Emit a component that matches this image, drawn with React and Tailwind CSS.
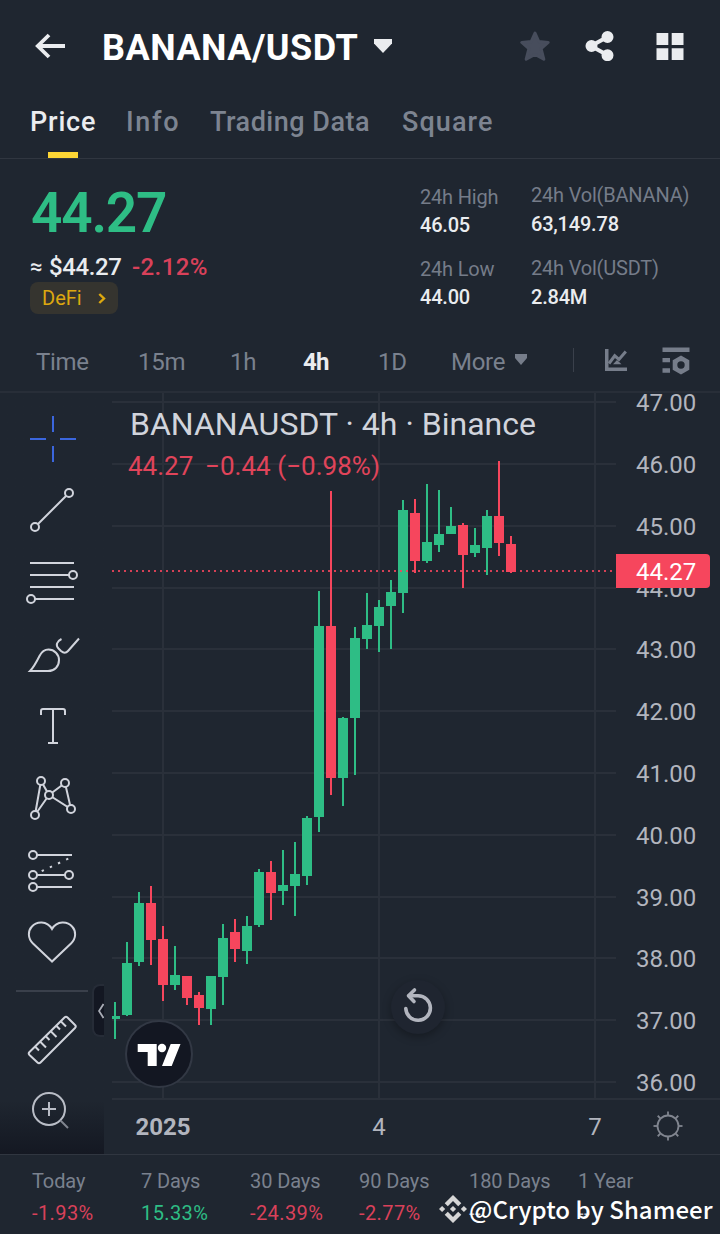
const GREEN = '#2ebd85'
const RED = '#f6465d'
const LINE = '#d1d4dc'

const TABS = [
  { label: 'Price', cls: 'w-[96px] text-[#eaecef] tracking-[0.8px]' },
  { label: 'Info', cls: 'w-[84px] text-[#7d8491] tracking-[1.7px]' },
  { label: 'Trading Data', cls: 'w-[192px] text-[#7d8491] tracking-[0.5px]' },
  { label: 'Square', cls: 'w-[120px] text-[#7d8491] tracking-[1.1px]' },
]

const INTERVALS = ['Time', '15m', '1h', '4h', '1D']

const PERIODS = [
  { label: 'Today', value: '-1.93%', color: 'text-[#d9415a]' },
  { label: '7 Days', value: '15.33%', color: 'text-[#2ebd85]' },
  { label: '30 Days', value: '-24.39%', color: 'text-[#d9415a]' },
  { label: '90 Days', value: '-2.77%', color: 'text-[#d9415a]' },
  { label: '180 Days', value: '--', color: 'text-[#b7bdc6]' },
  { label: '1 Year', value: '--', color: 'text-[#b7bdc6]' },
]

// high, body top, body bottom, low, up?
const CANDLES = [
  [1002, 1016, 1019, 1039, 1],
  [942, 963, 1015, 1016, 1],
  [892, 903, 962, 966, 1],
  [886, 903, 940, 965, 0],
  [926, 939, 985, 1001, 0],
  [946, 975, 985, 990, 1],
  [976, 976, 998, 1005, 0],
  [992, 995, 1008, 1025, 0],
  [976, 976, 1009, 1025, 1],
  [924, 938, 977, 1005, 1],
  [919, 932, 949, 962, 0],
  [916, 926, 951, 964, 1],
  [869, 872, 925, 927, 1],
  [861, 872, 893, 920, 0],
  [850, 885, 891, 905, 1],
  [842, 874, 886, 916, 1],
  [816, 818, 876, 885, 1],
  [591, 626, 817, 832, 1],
  [491, 626, 778, 795, 0],
  [717, 718, 778, 806, 1],
  [627, 638, 718, 775, 1],
  [593, 625, 639, 649, 1],
  [600, 607, 626, 652, 1],
  [580, 592, 606, 649, 1],
  [500, 510, 593, 613, 1],
  [499, 513, 561, 573, 0],
  [484, 542, 561, 563, 1],
  [490, 534, 545, 552, 1],
  [507, 526, 534, 534, 1],
  [523, 525, 555, 588, 0],
  [528, 545, 553, 557, 1],
  [510, 516, 548, 575, 1],
  [461, 516, 543, 556, 0],
  [536, 544, 572, 573, 0],
]

const PRICES = [
  ['47.00', 402], ['46.00', 464], ['45.00', 526], ['44.00', 588], ['43.00', 649], ['42.00', 711],
  ['41.00', 773], ['40.00', 835], ['39.00', 897], ['38.00', 958], ['37.00', 1020], ['36.00', 1082],
]

function Tool({ children, stroke = LINE }) {
  return (
    <svg className="w-[72px] h-[72px] shrink-0" viewBox="0 0 72 72" fill="none" stroke={stroke} strokeWidth="2">
      {children}
    </svg>
  )
}

function Ring({ x, y }) {
  return <circle cx={x} cy={y} r="4" fill="#1f2630" />
}

function Header() {
  return (
    <div className="flex items-center h-[92px] pl-[35px]">
      <svg className="w-[31px] h-[26px]" viewBox="0 0 31 26" fill="none" stroke="#eaecef" strokeWidth="3.8">
        <path d="M30 13H3M14 2L2.8 13L14 24" />
      </svg>
      <h1 className="ml-[36px] w-[272px] pt-[3px] text-[36px] leading-[46px] font-bold tracking-[0.5px] text-white whitespace-nowrap">
        BANANA/USDT
      </h1>
      <svg className="w-[18px] h-[14px]" viewBox="0 0 18 14" fill="#eaecef">
        <path d="M0 0H18V4.5L9 14L0 4.5Z" />
      </svg>
      <svg className="ml-[128px] w-[30px] h-[30px]" viewBox="0 0 30 30" fill="#474d5c" stroke="#474d5c" strokeWidth="3" strokeLinejoin="round">
        <path d="M15 2L18.8 10.5L28.2 11.4L21.1 17.7L23.8 28.2L15 23.4L6.2 28.2L8.9 17.7L1.8 11.4L11.2 10.5Z" />
      </svg>
      <svg className="ml-[35px] w-[30px] h-[30px]" viewBox="0 0 30 30" fill="#eaecef" stroke="#eaecef" strokeWidth="4">
        <path d="M22.3 6L6 15L22.3 24" fill="none" />
        <circle cx="6.5" cy="15" r="4" />
        <circle cx="22.5" cy="6" r="4" />
        <circle cx="22.5" cy="24.2" r="4" />
      </svg>
      <svg className="ml-[41px] w-[28px] h-[27px]" viewBox="0 0 28 27" fill="#eaecef">
        <path d="M0.5 0H12.3V12H0.5ZM15.7 0H27.5V12H15.7ZM0.5 15.2H12.3V27H0.5ZM15.7 15.2H27.5V27H15.7Z" />
      </svg>
    </div>
  )
}

function Stat({ label, value }) {
  return (
    <div>
      <p className="text-[#757c89] tracking-[-0.2px]">{label}</p>
      <p className="text-[#eaecef] font-medium tracking-[-0.2px]">{value}</p>
    </div>
  )
}

function Summary() {
  return (
    <div className="flex h-[173px]">
      <div className="w-[420px] pl-[30px] pt-[27px]">
        <p className="ml-px text-[55px] leading-[54px] font-semibold tracking-[-1.2px] text-[#2ebd85]">44.27</p>
        <p className="mt-3 text-[24px] leading-[30px] font-medium text-[#eaecef] flex">
          <span className="w-[19px] text-[22px]">≈</span>
          <span className="w-[83px] tracking-[-0.4px]">$44.27</span>
          <span className="text-[#d9415a] tracking-[0.4px]">-2.12%</span>
        </p>
        <div className="flex items-center w-[88px] h-8 pl-3 rounded-lg bg-[#35342f] text-[20px] text-[#dda80f]">
          DeFi
          <svg className="ml-[16px] w-2 h-[11px]" viewBox="0 0 8 11" fill="none" stroke="#dda80f" strokeWidth="2.4">
            <path d="M1.3 1L6 5.5L1.3 10" />
          </svg>
        </div>
      </div>
      <div className="w-[111px] pt-[24px] text-[20px] leading-[28px] flex flex-col gap-4">
        <Stat label="24h High" value="46.05" />
        <Stat label="24h Low" value="44.00" />
      </div>
      <div className="pt-[22px] text-[20px] leading-[28.5px] flex flex-col gap-4">
        <Stat label="24h Vol(BANANA)" value="63,149.78" />
        <Stat label="24h Vol(USDT)" value="2.84M" />
      </div>
    </div>
  )
}

function Intervals() {
  return (
    <div className="flex items-center h-[61px] pl-9 border-b-2 border-[#282e38] text-[24px] tracking-[-0.3px] text-[#7a818e]">
      <div className="grid grid-cols-[102px_92px_73px_75px_73px]">
        {INTERVALS.map(t => (
          <span key={t} className={t === '4h' ? 'font-bold tracking-[-0.8px] text-[#eaecef]' : ''}>{t}</span>
        ))}
      </div>
      <span className="w-[64px]">More</span>
      <svg className="w-3 h-[11px] -mt-1" viewBox="0 0 12 11" fill="#767d8a">
        <path d="M0 0H12V4L6 11L0 4Z" />
      </svg>
      <div className="ml-[46px] w-px h-6 -mt-1 bg-[#3a404b]" />
      <svg className="ml-[31px] w-[22px] h-[22px] -mt-[3px]" viewBox="0 0 22 22" fill="none" stroke="#767d8a">
        <path d="M1.7 0V20.2H22" strokeWidth="3.6" />
        <path d="M4 14.5L9.7 6.8L14 10.5L20.8 2.5" strokeWidth="3" />
        <path d="M8 15.3L12 11L16.500 15.3Z" fill="#767d8a" stroke="none" />
      </svg>
      <svg className="ml-[35px] w-[28px] h-[28px] -mt-0.5" viewBox="0 0 28 28" fill="#767d8a">
        <path d="M0.5 0.5H27.5V5H0.5ZM0.5 11H8V15.3H0.5ZM0.5 21.3H8V25.7H0.5Z" />
        <path fillRule="evenodd" d="M19 8.5L27.3 13.2V22.8L19 27.5L10.7 22.8V13.2ZM19 14.3A3.7 3.7 0 1 0 19 21.7A3.7 3.7 0 1 0 19 14.3Z" />
      </svg>
    </div>
  )
}

function Toolbar() {
  return (
    <div className="relative w-[104px] h-[761px] pt-[10px] pl-4 flex flex-col bg-linear-to-b from-[#1f2630] from-93% to-[#141822]">
      <Tool stroke="#3b66dd">
        <path d="M37 13V29M37 43V59M14 36H30M44 36H60" />
      </Tool>
      <Tool>
        <path d="M19 52L53 18" />
        <Ring x={53} y={18} />
        <Ring x={19} y={52} />
      </Tool>
      <Tool>
        <path d="M14 16H58M14 28H53M14 40H58M19 52H58" />
        <Ring x={57} y={28} />
        <Ring x={15} y={52} />
      </Tool>
      <Tool>
        <path d="M14 52C18 48 21 42 23.5 37C26 32 29 30.5 32.5 30.5C38.5 30.5 43 35.5 43 41C43 47.5 38.5 52 32 52Z" />
        <path d="M45.5 20C40.5 22.5 39.5 26.5 42.5 29.5L45 32C47.5 34.2 50 34.2 52 32L63 19.5" />
      </Tool>
      <Tool>
        <path d="M25 24V20Q25 18 27 18H47Q49 18 49 20V24M37 18V52M32 52H42" />
      </Tool>
      <Tool>
        <path d="M25 18L19 52L33 32ZM33 32L49 20L55 46Z" />
        <Ring x={25} y={18} />
        <Ring x={49} y={20} />
        <Ring x={33} y={32} />
        <Ring x={55} y={46} />
        <Ring x={19} y={52} />
      </Tool>
      <Tool>
        <path d="M17 20H56M17 40H53M17 52H56" />
        <path d="M25.7 36.2L53 23.3" strokeDasharray="2.4 6.6" />
        <Ring x={17} y={20} />
        <Ring x={17} y={40} />
        <Ring x={53} y={40} />
        <Ring x={17} y={52} />
      </Tool>
      <Tool>
        <path d="M36 54.5L17 36.5C11.5 31 12 24 15.5 20C20.5 14 31 13.5 36 22C41 13.5 51.5 14 56.5 20C60 24 60.5 31 55 36.5Z" />
      </Tool>
      <div className="mt-[11px] w-[72px] h-0.5 shrink-0 bg-[#3a404b]" />
      <div className="h-3 shrink-0" />
      <Tool>
        <path d="M48.5 13.5Q50 12 51.5 13.5L59 21Q60.5 22.5 59 24L24.5 58.5Q23 60 21.5 58.5L13.5 51Q12 49.5 13.5 48Z" />
        <path d="M19 42.5L23 46.5M24 37.5L30 43.5M29.5 32L33.5 36M34.5 27L40.5 33M40 21.5L44 25.5M44.5 17L50 22.5" />
      </Tool>
      <Tool stroke="#b9bdc6">
        <circle cx="33" cy="33" r="16" />
        <path d="M33 26V40M26 33H40" />
        <path d="M44.5 44.5L52 52" stroke="#80858f" />
      </Tool>
      <div className="absolute right-0 top-[591px] w-[12px] h-[53px] rounded-l-lg border-2 border-r-0 border-[#262c37] bg-[#131722] flex items-center justify-end">
        <svg className="w-[6px] h-4" viewBox="0 0 6 16" fill="none" stroke="#a9adb6" strokeWidth="1.8">
          <path d="M5.5 1L1 8L5.5 15" />
        </svg>
      </div>
    </div>
  )
}

function Chart() {
  return (
    <svg className="w-[616px] h-[761px]" viewBox="104 393 616 761" fontFamily="Roboto, sans-serif">
      <g stroke="#2a303a" strokeWidth="2">
        {PRICES.map(([p, y]) => <path key={p} d={`M112 ${y}H616`} />)}
        <path d="M163 393V1099M379 393V1099M595 393V1099M112 1099H720" />
      </g>
      {CANDLES.map(([high, top, bottom, low, up], i) => {
        const x = 115 + i * 12
        const left = Math.max(x - 5, 112)
        return (
          <g key={x} fill={up ? GREEN : RED}>
            <rect x={x - 1} y={high} width="2" height={low - high} />
            <rect x={left} y={top} width={x + 5 - left} height={bottom - top} />
          </g>
        )
      })}
      <path d="M112 571H614" stroke={RED} strokeWidth="2" strokeDasharray="2 4" opacity="0.85" />

      <text x="130" y="435" fontSize="32" fill="#d1d4dc" textLength="406">BANANAUSDT · 4h · Binance</text>
      <g fontSize="26" fill="#e0445a">
        <text x="128" y="475">44.27</text>
        <text x="205" y="475" textLength="175">−0.44 (−0.98%)</text>
      </g>

      <g fontSize="24" fill="#b2b5be">
        {PRICES.map(([p, y]) => <text key={p} x="636" y={y + 9}>{p}</text>)}
        <g textAnchor="middle">
          <text x="163" y="1135" fontWeight="700">2025</text>
          <text x="379" y="1135">4</text>
          <text x="595" y="1135">7</text>
        </g>
      </g>
      <path d="M616 554H706Q710 554 710 558V584Q710 588 706 588H616Z" fill={RED} />
      <text x="636" y="580" fontSize="24" fill="#fff">44.27</text>

      {/* TradingView badge */}
      <circle cx="159" cy="1054" r="33" fill="#131722" stroke="#323844" strokeWidth="2" />
      <g fill="#fff">
        <path d="M137.7 1044H156.7V1066H147.7V1052H137.7ZM170.7 1044H180.5L171.7 1066H162Z" />
        <circle cx="162" cy="1048" r="4.2" />
      </g>

      {/* reset */}
      <circle cx="418" cy="1007" r="27" fill="#1f2530" style={{ filter: 'drop-shadow(0 3px 4px rgba(0,0,0,0.3))' }} />
      <g fill="none" stroke="#b2b5be" strokeWidth="3.6" strokeLinecap="round" strokeLinejoin="round">
        <path d="M405.8 1008.5A12.3 12.3 0 1 0 418 995.7H409" />
        <path d="M414.5 990L408.5 995.7L414 1001.5" />
      </g>

      {/* axis settings */}
      <g stroke="#80858f" strokeWidth="1.8" fill="none">
        <circle cx="668" cy="1126" r="10.5" />
        {[0, 45, 90, 135, 180, 225, 270, 315].map(a => (
          <path key={a} d="M668 1115.5V1111.5" transform={`rotate(${a} 668 1126)`} />
        ))}
      </g>
    </svg>
  )
}

function Footer() {
  return (
    <div className="relative h-[80px] border-t border-[#303640] pl-8 pt-[11px]">
      <div className="grid grid-cols-[109px_109px_109px_110px_109px_100px] text-[20px] tracking-[-0.1px]">
        {PERIODS.map(p => (
          <div key={p.label} className="whitespace-nowrap">
            <p className="leading-[31px] text-[#7a818e]">{p.label}</p>
            <p className={`leading-[33px] tracking-[0.4px] ${p.color}`}>{p.value}</p>
          </div>
        ))}
      </div>
      <div className="absolute left-[439px] top-[37px] h-[34px] flex items-center">
        <svg className="w-[28px] h-[28px]" viewBox="0 0 28 28" fill="#d6d6d6">
          <path d="M14 0L22.3 8.2L19.2 11.2L14 6.1L8.8 11.2L5.7 8.2Z" />
          <path d="M14 28L22.3 19.8L19.2 16.8L14 21.9L8.8 16.8L5.7 19.8Z" />
          <path d="M14 10.9L17.1 14L14 17.1L10.9 14ZM3.1 10.9L6.2 14L3.1 17.1L0 14ZM24.9 10.9L28 14L24.9 17.1L21.8 14Z" />
        </svg>
        <span className="ml-[2px] text-[24px] leading-[34px] font-medium tracking-[0.07px] text-white whitespace-nowrap font-['Noto_Sans_CJK_SC',sans-serif]">
          @Crypto by Shameer
        </span>
      </div>
    </div>
  )
}

export default function App() {
  return (
    <div className="w-[720px] h-[1234px] overflow-hidden bg-[#1f2630] font-['Roboto',sans-serif]">
      <Header />
      <div className="flex h-[67px] pl-[30px] border-b border-[#303640] text-[27px] font-medium">
        {TABS.map(t => (
          <div key={t.label} className={t.cls}>
            <p className="leading-[60px] whitespace-nowrap">{t.label}</p>
            {t.label === 'Price' && <div className="ml-[18px] w-[30px] h-1.5 bg-[#fcd535]" />}
          </div>
        ))}
      </div>
      <Summary />
      <Intervals />
      <div className="flex">
        <Toolbar />
        <Chart />
      </div>
      <Footer />
    </div>
  )
}
